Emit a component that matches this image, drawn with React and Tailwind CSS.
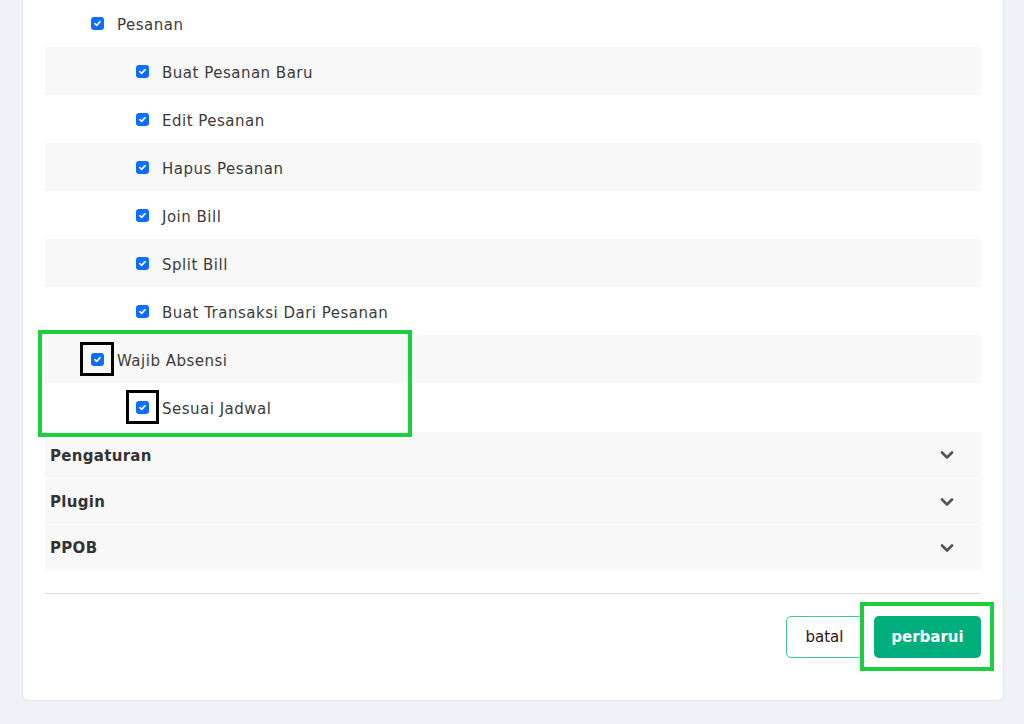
import React from "react";
import { ChevronDown } from "lucide-react";

const perms = [
  { label: "Pesanan", level: 1, bg: "bg-white", h: "h-[47px]" },
  { label: "Buat Pesanan Baru", level: 2, bg: "bg-[#f8f8f8]", h: "h-[48px]" },
  { label: "Edit Pesanan", level: 2, bg: "bg-white", h: "h-[48px]" },
  { label: "Hapus Pesanan", level: 2, bg: "bg-[#f8f8f8]", h: "h-[48px]" },
  { label: "Join Bill", level: 2, bg: "bg-white", h: "h-[48px]" },
  { label: "Split Bill", level: 2, bg: "bg-[#f8f8f8]", h: "h-[48px]" },
  { label: "Buat Transaksi Dari Pesanan", level: 2, bg: "bg-white", h: "h-[48px]" },
  { label: "Wajib Absensi", level: 1, bg: "bg-[#f8f8f8]", h: "h-[48px]" },
  { label: "Sesuai Jadwal", level: 2, bg: "bg-white", h: "h-[49px]" },
];

const sections = ["Pengaturan", "Plugin", "PPOB"];

const Check = () => (
  <span className="flex h-[13px] w-[13px] shrink-0 items-center justify-center rounded-[3px] bg-[#0d6efd]">
    <svg width="9" height="9" viewBox="0 0 12 12" fill="none">
      <path d="M2.5 6.2l2.3 2.3 4.7-5" stroke="white" strokeWidth="2" strokeLinecap="round" strokeLinejoin="round" />
    </svg>
  </span>
);

const App = () => {
  return (
    <div
      className="relative h-[724px] w-[1024px] overflow-hidden bg-[#eef2f6] text-[#3b3b3b]"
      style={{ fontFamily: "'DejaVu Sans', 'Open Sans', sans-serif" }}
    >
      <div className="ml-[22px] w-[982px] rounded-b-md border border-t-0 border-[#e2e6ea] bg-white px-[22px] pb-[42px]">
        {/* permission list */}
        {perms.map((p) => (
          <div key={p.label} className={`flex items-center ${p.bg} ${p.h}`}>
            <div className={`flex items-center gap-[13px] ${p.level === 1 ? "pl-[46px]" : "pl-[91px]"}`}>
              <Check />
              <span className="mt-[4px] text-[15px] tracking-[0.5px]">{p.label}</span>
            </div>
          </div>
        ))}

        {/* collapsed groups */}
        <div className="flex flex-col gap-px">
          {sections.map((s, i) => (
            <div
              key={s}
              className={`flex items-center justify-between bg-[#f8f8f8] pl-[5px] pr-[24px] ${i === 0 ? "h-[46px]" : "h-[45px]"}`}
            >
              <span className="mt-[2px] text-[15px] font-bold tracking-[0.3px] text-[#333]">{s}</span>
              <ChevronDown size={20} strokeWidth={3.2} className="text-[#555]" />
            </div>
          ))}
        </div>

        <div className="mt-[23px] border-t border-[#dcdcdc]" />

        <div className="mt-[22px] flex justify-end gap-[11px]">
          <button className="h-[42px] w-[77px] rounded-[5px] border border-[#3cc79b] bg-white text-[15px] text-[#2b1414]">
            batal
          </button>
          <button className="h-[42px] w-[107px] rounded-[5px] bg-[#00ad7d] text-[15px] font-bold text-white">
            perbarui
          </button>
        </div>
      </div>

      {/* annotation overlays */}
      <div className="absolute left-[38px] top-[330px] h-[107px] w-[374px] border-4 border-[#1ccf3e]" />
      <div className="absolute left-[80px] top-[342px] h-[34px] w-[34px] border-[3px] border-black" />
      <div className="absolute left-[126px] top-[390px] h-[34px] w-[33px] border-[3px] border-black" />
      <div className="absolute left-[860px] top-[602px] h-[69px] w-[134px] border-4 border-[#1ccf3e]" />
    </div>
  );
};

export default App;
